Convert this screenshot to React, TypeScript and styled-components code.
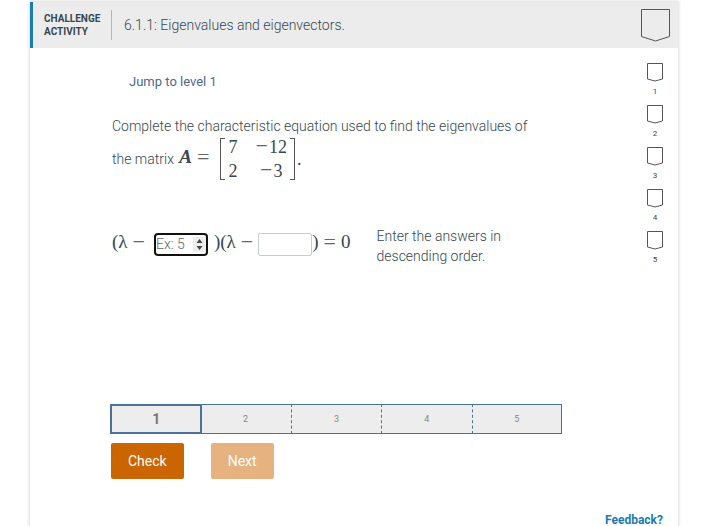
import React from "react";
import styled, { createGlobalStyle } from "styled-components";

const GlobalStyle = createGlobalStyle`
  * { box-sizing: border-box; }
  body {
    margin: 0;
    background: #fff;
    color: #37474f;
    font: 300 14px/20px Roboto, sans-serif;
  }
`;

const Card = styled.main`
  display: flex;
  flex-direction: column;
  min-height: calc(100vh - 2px);
  margin: 2px 38px 0 30px;
  box-shadow: 0 0 3px 1px #dcdcdc;
`;

const Header = styled.header`
  display: flex;
  align-items: center;
  height: 46px;
  padding: 0 7px 0 11px;
  border-left: 3px solid #1a7db5;
  background: #ececec;
`;

const Kind = styled.div`
  width: 68px;
  padding: 2px 0;
  border-right: 1px solid #b4b4b4;
  font-size: 10px;
  line-height: 13px;
  font-weight: 700;
`;

const Title = styled.h1`
  flex: 1;
  margin: 0 0 0 12px;
  font-size: 14px;
  font-weight: 300;
`;

const Body = styled.div`
  display: flex;
  flex: 1;
`;

const Activity = styled.section`
  flex: 1;
  padding: 24px 36px 0 80px;
`;

const JumpLink = styled.a`
  display: block;
  width: fit-content;
  margin-left: 19px;
  color: #4f6890;
  font-size: 13px;
  font-weight: 400;
  text-decoration: none;
`;

const Prompt = styled.div`
  margin: 24px 0 0 2px;
`;

const MathRow = styled.div`
  display: flex;
  align-items: center;
`;

const MatrixRow = styled(MathRow)`
  height: 46px;
`;

const Expression = styled.span`
  display: flex;
  align-items: center;
  padding-bottom: 4px;
  font: 400 19px/22px "Liberation Serif", serif;
  white-space: nowrap;
`;

const Operator = styled.span`
  margin: 0 5px;
  color: #666;
  font-size: 22px;
`;

const Variable = styled.i`
  margin-left: 2px;
  font-weight: 700;
`;

const Matrix = styled.div`
  display: flex;
  align-items: stretch;
  margin-left: 6px;
  font: 400 18px/24px "Liberation Serif", serif;
`;

const Bracket = styled.span<{ $side: "left" | "right" }>`
  width: 5px;
  height: 42px;
  align-self: center;
  border: solid #555;
  border-width: ${({ $side }) => ($side === "left" ? "1px 0 1px 1px" : "1px 1px 1px 0")};
`;

const Cells = styled.div`
  display: grid;
  grid-template-columns: auto auto;
  column-gap: 18px;
  padding: 0 3px;
  text-align: center;
`;

const Minus = styled.span`
  margin-right: 1px;
  color: #666;
  font-size: 22px;
  line-height: 0;
`;

const Period = styled.span`
  align-self: center;
  margin-left: 2px;
`;

const Equation = styled(MathRow)`
  margin: 40px 0 0 2px;
`;

const NumberBox = styled.label<{ $active?: boolean }>`
  display: flex;
  align-items: center;
  width: 54px;
  height: 23px;
  margin: ${({ $active }) => ($active ? "0 6px 0 4px" : "0")};
  border: ${({ $active }) => ($active ? "2px solid #111" : "1px solid #c4cdd2")};
  border-radius: ${({ $active }) => ($active ? "4px" : "2px")};
  background: #fff;
`;

const NumberInput = styled.input`
  flex: 1;
  min-width: 0;
  height: 100%;
  padding: 0;
  border: 0;
  outline: 0;
  background: transparent;
  color: #37474f;
  font: 300 14px Roboto, sans-serif;
  &::placeholder { color: #666; opacity: 1; }
`;

const Spinner = styled.svg`
  width: 13px;
  height: 15px;
  background: #eee;
`;

const Hint = styled.p`
  width: 140px;
  margin: 4px 0 0 26px;
`;

const Steps = styled.ol`
  display: grid;
  grid-template-columns: repeat(5, 1fr);
  height: 30px;
  margin: 138px 0 0;
  padding: 0;
  list-style: none;
`;

const Step = styled.li<{ $current?: boolean }>`
  display: flex;
  align-items: center;
  justify-content: center;
  z-index: ${({ $current }) => ($current ? 1 : 0)};
  margin-right: ${({ $current }) => ($current ? "-2px" : "0")};
  border: 1px solid #4d7198;
  border-width: ${({ $current }) => ($current ? "2px" : "1px 0")};
  background: #ededed;
  color: ${({ $current }) => ($current ? "#777" : "#888")};
  font-size: ${({ $current }) => ($current ? "14px" : "9px")};
  font-weight: ${({ $current }) => ($current ? 700 : 400)};
  & + & + & { border-left: 1px dashed #4d7198; }
  &:last-child { border-right: 1px solid #4d7198; }
`;

const Actions = styled.div`
  display: flex;
  gap: 27px;
  margin: 9px 0 0 1px;
`;

const ActionButton = styled.button`
  height: 36px;
  padding: 0 17px;
  border: 0;
  border-radius: 2px;
  background: #cb6500;
  color: #fff;
  font: 400 14px Roboto, sans-serif;
  &:disabled { background: #e6b280; }
`;

const Levels = styled.ol`
  display: flex;
  flex-direction: column;
  width: 80px;
  margin: 0;
  padding: 15px 0 0;
  list-style: none;
`;

const Level = styled.li`
  display: flex;
  flex-direction: column;
  align-items: center;
  gap: 5px;
  height: 42px;
  padding-left: 34px;
  font-size: 8px;
  line-height: 10px;
  font-weight: 400;
`;

const Footer = styled.footer`
  display: flex;
  justify-content: flex-end;
  padding-right: 15px;
`;

const FeedbackLink = styled.a`
  color: #1a79b4;
  font-size: 12px;
  line-height: 12px;
  font-weight: 700;
  text-decoration: none;
`;

function LargeShield() {
  return (
    <svg width="30" height="34" viewBox="0 0 30 34" fill="none" stroke="#555" aria-hidden="true">
      <path d="M.5 1.5h28v27l-14 4.5-14-4.5Z" />
    </svg>
  );
}

function SmallShield() {
  return (
    <svg width="16" height="19" viewBox="0 0 16 19" fill="none" stroke="#555" aria-hidden="true">
      <path d="M.5.5h15v15.5l-7.5 2-7.5-2Z" />
    </svg>
  );
}

const levels = [1, 2, 3, 4, 5];

export default function App() {
  return (
    <>
      <GlobalStyle />
      <Card>
        <Header>
          <Kind>CHALLENGE<br />ACTIVITY</Kind>
          <Title>6.1.1: Eigenvalues and eigenvectors.</Title>
          <LargeShield />
        </Header>
        <Body>
          <Activity>
            <JumpLink href="#level-1">Jump to level 1</JumpLink>
            <Prompt>
              Complete the characteristic equation used to find the eigenvalues of
              <MatrixRow>
                <span>the matrix&nbsp;</span>
                <Expression><Variable>A</Variable><Operator>=</Operator></Expression>
                <Matrix>
                  <Bracket $side="left" />
                  <Cells>
                    <span>7</span><span><Minus>−</Minus>12</span>
                    <span>2</span><span><Minus>−</Minus>3</span>
                  </Cells>
                  <Bracket $side="right" />
                  <Period>.</Period>
                </Matrix>
              </MatrixRow>
            </Prompt>
            <Equation>
              <Expression>(λ<Operator>−</Operator></Expression>
              <NumberBox $active>
                <NumberInput inputMode="numeric" placeholder="Ex: 5" aria-label="First eigenvalue" />
                <Spinner viewBox="0 0 13 15" fill="#444" aria-hidden="true">
                  <path d="M3.5 6 6.5 2l3 4ZM3.5 9l3 4 3-4Z" />
                </Spinner>
              </NumberBox>
              <Expression>)(λ<Operator>−</Operator></Expression>
              <NumberBox>
                <NumberInput inputMode="numeric" aria-label="Second eigenvalue" />
              </NumberBox>
              <Expression>)<Operator>=</Operator>0</Expression>
              <Hint>Enter the answers in descending order.</Hint>
            </Equation>
            <Steps>
              {levels.map((n) => (
                <Step key={n} $current={n === 1}>{n}</Step>
              ))}
            </Steps>
            <Actions>
              <ActionButton type="button">Check</ActionButton>
              <ActionButton type="button" disabled>Next</ActionButton>
            </Actions>
          </Activity>
          <Levels>
            {levels.map((n) => (
              <Level key={n}><SmallShield />{n}</Level>
            ))}
          </Levels>
        </Body>
        <Footer>
          <FeedbackLink href="#feedback">Feedback?</FeedbackLink>
        </Footer>
      </Card>
    </>
  );
}
